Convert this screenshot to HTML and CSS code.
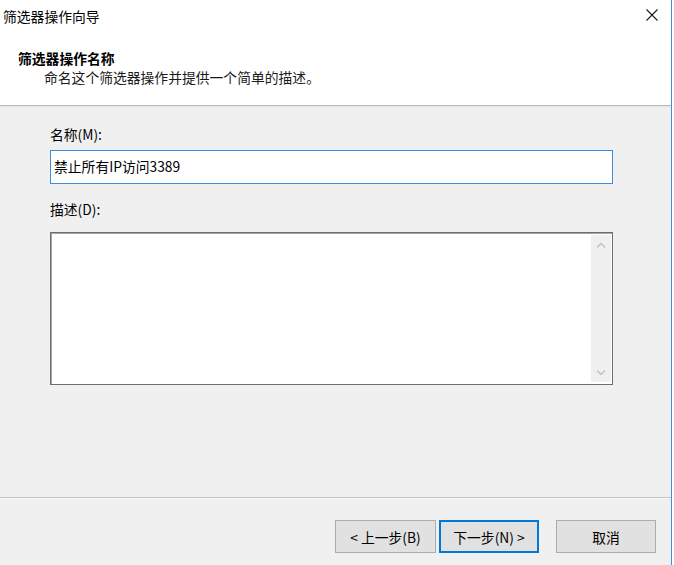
FILE: index.html
```html
<!DOCTYPE html>
<html lang="zh-CN">
<head>
<meta charset="utf-8">
<title>筛选器操作向导</title>
<link rel="stylesheet" href="styles.css">
</head>
<body>
<div class="window">
  <div class="titlebar">
    <span class="title">筛选器操作向导</span>
    <span class="close">
      <svg width="12" height="12" viewBox="0 0 12 12"><path d="M0.5 0.5 L11.5 11.5 M11.5 0.5 L0.5 11.5" stroke="#1a1a1a" stroke-width="1.1" fill="none"/></svg>
    </span>
  </div>
  <div class="header">
    <div class="heading">筛选器操作名称</div>
    <div class="subheading">命名这个筛选器操作并提供一个简单的描述。</div>
  </div>
  <div class="content">
    <div class="label">名称(M):</div>
    <div class="input">禁止所有IP访问3389</div>
    <div class="label label-desc">描述(D):</div>
    <div class="textarea">
      <div class="scrollbar">
        <svg width="10" height="7" viewBox="0 0 10 7"><path d="M1 5.5 L5 1.5 L9 5.5" stroke="#c2c2c2" stroke-width="1.4" fill="none"/></svg>
        <svg width="10" height="7" viewBox="0 0 10 7"><path d="M1 1.5 L5 5.5 L9 1.5" stroke="#c2c2c2" stroke-width="1.4" fill="none"/></svg>
      </div>
    </div>
  </div>
  <div class="footer">
    <button class="btn btn-back">&lt; 上一步(B)</button>
    <button class="btn btn-next">下一步(N) &gt;</button>
    <button class="btn btn-cancel">取消</button>
  </div>
</div>
</body>
</html>
```

FILE: styles.css
```css
html, body {
  margin: 0;
  padding: 0;
  background: #ffffff;
}
body {
  width: 674px;
  height: 565px;
  overflow: hidden;
  font-family: "Noto Sans CJK SC", "Noto Sans", "Liberation Sans", sans-serif;
  font-size: 13.8px;
  color: #000;
}
.window {
  width: 671px;
  height: 565px;
  border-right: 1px solid #3f8fdc;
  display: flex;
  flex-direction: column;
  background: #f0f0f0;
}
.titlebar {
  height: 31px;
  flex: none;
  background: #fff;
  display: flex;
  align-items: center;
  justify-content: space-between;
  padding: 0 13px 0 3px;
}
.title {
  line-height: 18px;
  margin-top: 1px;
}
.close {
  display: flex;
  width: 12px;
  height: 12px;
  margin-bottom: 1px;
}
.header {
  background: #fff;
  height: 75px;
  flex: none;
  padding-left: 18px;
  border-bottom: 1px solid #bcbcbc;
  box-sizing: border-box;
  padding-top: 18px;
}
.header + .content {
  border-top: 1px solid #e3e3e3;
}
.heading {
  font-weight: bold;
  line-height: 18px;
}
.subheading {
  line-height: 18px;
  margin-top: 1px;
  padding-left: 26px;
  color: #1a1a1a;
}
.content {
  height: 392px;
  flex: none;
  box-sizing: border-box;
  padding: 18px 58px 0 50px;
  border-bottom: 1px solid #c6c6c6;
}
.label {
  line-height: 18px;
}
.input {
  margin-top: 7px;
  height: 34px;
  box-sizing: border-box;
  border: 1px solid #3c8ddb;
  background: #fff;
  padding: 0 0 0 3px;
  line-height: 30px;
}
.label-desc {
  margin-top: 16px;
}
.textarea {
  margin-top: 14px;
  height: 153px;
  box-sizing: border-box;
  border: 1px solid #6e6e6e;
  box-shadow: inset 1px 1px 0 #a5a5a5;
  background: #fff;
  display: flex;
  justify-content: flex-end;
}
.scrollbar {
  width: 20px;
  margin: 2px 1px 2px 0;
  background: #f0f0f0;
  display: flex;
  flex-direction: column;
  justify-content: space-between;
  align-items: center;
  padding: 7px 0 6px;
  box-sizing: border-box;
}
.scrollbar svg {
  display: block;
}
.footer {
  flex: 1;
  display: flex;
  justify-content: flex-end;
  align-items: flex-start;
  padding: 21px 15px 0 0;
  border-top: 1px solid #f6f6f6;
}
.btn {
  font-family: inherit;
  font-size: 13.8px;
  width: 100px;
  height: 33px;
  box-sizing: border-box;
  background: #e1e1e1;
  border: 1px solid #adadad;
  color: #000;
  padding: 0;
  margin: 0;
}
.btn-back {
  width: 101px;
}
.btn-next {
  margin-left: 3px;
  border: 2px solid #0078d7;
}
.btn-cancel {
  margin-left: 17px;
}
```
